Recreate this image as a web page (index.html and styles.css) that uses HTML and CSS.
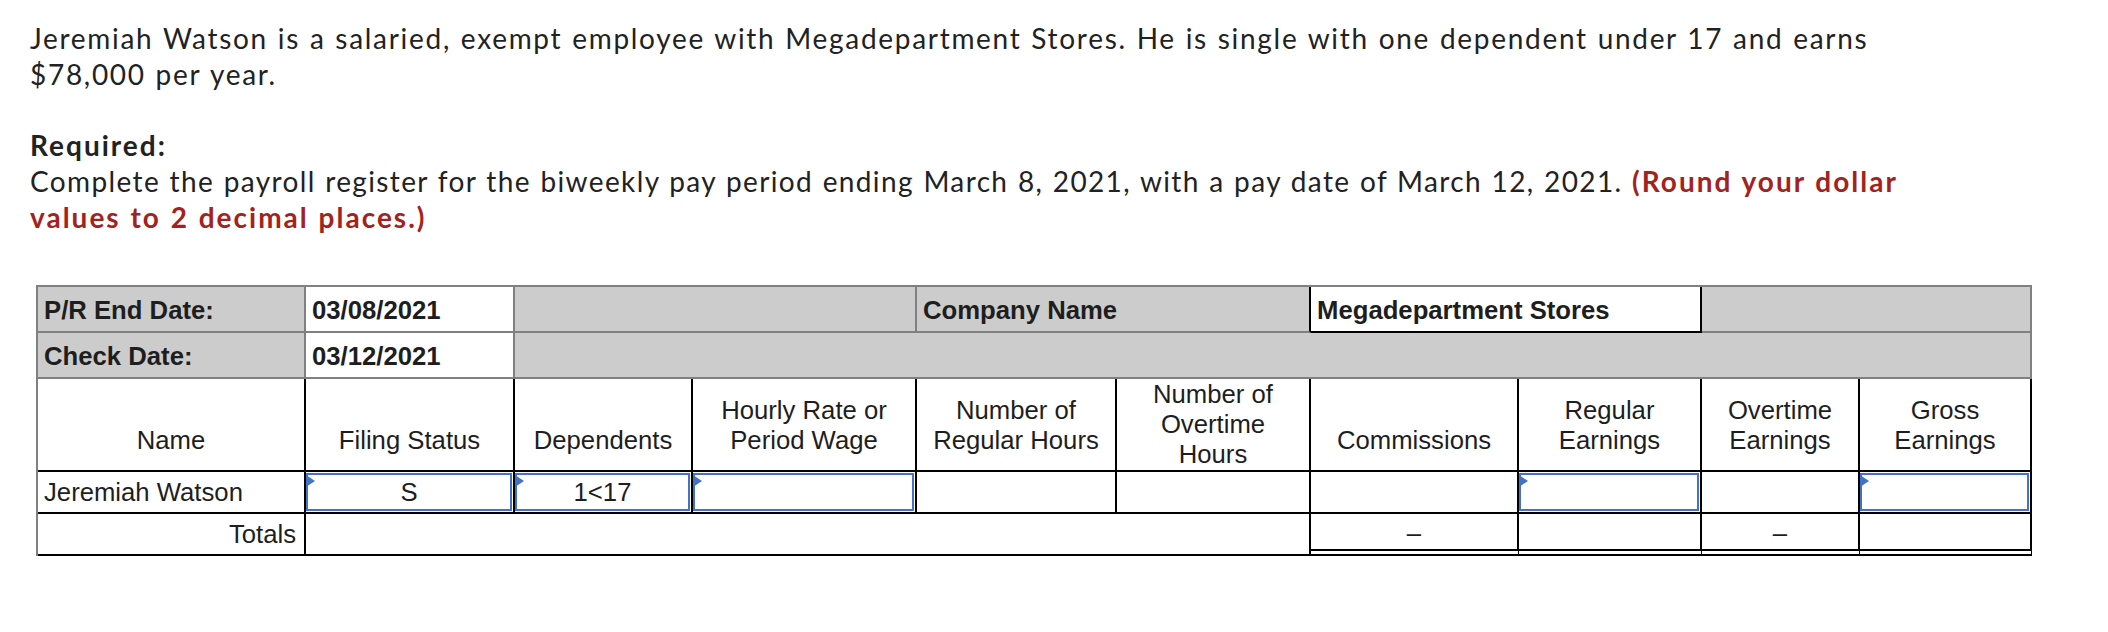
FILE: index.html
```html
<!DOCTYPE html>
<html lang="en">
<head>
<meta charset="utf-8">
<title>Payroll register</title>
<link rel="stylesheet" href="styles.css">
</head>
<body>
<div class="page">
  <p class="intro">Jeremiah Watson is a salaried, exempt employee with Megadepartment Stores. He is single with one dependent under 17 and earns $78,000 per year.</p>
  <div class="req">
    <strong class="req-title">Required:</strong>
    <p class="req-text">Complete the payroll register for the biweekly pay period ending March 8, 2021, with a pay date of March 12, 2021. <strong class="red">(Round your dollar</strong> <strong class="red">values to 2 decimal places.)</strong></p>
  </div>

  <div class="register">
    <div class="c top">P/R End Date:</div>
    <div class="c top white">03/08/2021</div>
    <div class="c top span2"></div>
    <div class="c top span2 dark-r">Company Name</div>
    <div class="c top span2 white mega">Megadepartment Stores</div>
    <div class="c top span2"></div>

    <div class="c top">Check Date:</div>
    <div class="c top white">03/12/2021</div>
    <div class="c top span8"></div>

    <div class="c head">Name</div>
    <div class="c head">Filing Status</div>
    <div class="c head">Dependents</div>
    <div class="c head">Hourly Rate or<br>Period Wage</div>
    <div class="c head">Number of<br>Regular Hours</div>
    <div class="c head three">Number of<br>Overtime<br>Hours</div>
    <div class="c head">Commissions</div>
    <div class="c head">Regular<br>Earnings</div>
    <div class="c head">Overtime<br>Earnings</div>
    <div class="c head">Gross<br>Earnings</div>

    <div class="c data name">Jeremiah Watson</div>
    <div class="c data"><div class="input">S</div></div>
    <div class="c data"><div class="input">1&lt;17</div></div>
    <div class="c data"><div class="input"></div></div>
    <div class="c data"></div>
    <div class="c data"></div>
    <div class="c data"></div>
    <div class="c data"><div class="input"></div></div>
    <div class="c data"></div>
    <div class="c data"><div class="input"></div></div>

    <div class="c data totals">Totals</div>
    <div class="c data span5"></div>
    <div class="c data dbl">–</div>
    <div class="c data dbl"></div>
    <div class="c data dbl">–</div>
    <div class="c data dbl"></div>
  </div>
</div>
</body>
</html>
```

FILE: styles.css
```css
html, body {
  margin: 0;
  padding: 0;
  background: #ffffff;
}

.page {
  padding: 20px 0 0 30px;
  font-family: "Lato", "Open Sans", sans-serif;
  color: #222222;
}

.intro,
.req {
  margin: 0;
  width: 1910px;
  font-size: 28px;
  line-height: 36px;
  letter-spacing: 1.7px;
  word-spacing: 1px;
}

.req {
  margin-top: 35px;
}

.req-title {
  display: block;
  font-weight: 700;
  letter-spacing: 2px;
}

.req-text {
  margin: 0;
  letter-spacing: 1.37px;
}

.red {
  color: #a4221e;
  font-weight: 700;
  letter-spacing: 2px;
}

.register {
  margin: 50px 0 0 6px;
  display: grid;
  grid-template-columns: 268px 209px 178px 224px 200px 194px 208px 183px 158px 172px;
  grid-template-rows: 46px 46px 93px 42px 42px;
  width: max-content;
  border-top: 2px solid #808080;
  border-left: 2px solid #808080;
  font-family: "Liberation Sans", Arial, sans-serif;
  font-size: 25.7px;
  color: #1e1e1e;
}

.c {
  box-sizing: border-box;
  border-right: 2px solid #000000;
  border-bottom: 2px solid #000000;
  min-width: 0;
}

.top {
  background: #cccccc;
  border-color: #808080;
  display: flex;
  align-items: center;
  padding: 2px 6px 0;
  font-weight: 700;
}

.white {
  background: #ffffff;
}

.dark-r {
  border-right-color: #000000;
}

.mega {
  border-right-color: #000000;
  border-bottom-color: #000000;
}

.span2 { grid-column: span 2; }
.span5 { grid-column: span 5; }
.span8 { grid-column: span 8; }

.head {
  display: flex;
  align-items: flex-end;
  justify-content: center;
  text-align: center;
  line-height: 30px;
  padding-bottom: 15px;
}

.head.three {
  padding-bottom: 1px;
}

.data {
  display: flex;
  align-items: center;
  justify-content: center;
  line-height: 29px;
}

.name {
  justify-content: flex-start;
  padding-left: 6px;
}

.totals {
  justify-content: flex-end;
  padding-right: 8px;
}

.dbl {
  border-bottom: 7px double #000000;
  align-items: flex-start;
  padding-top: 5px;
}

.input {
  position: relative;
  box-sizing: border-box;
  align-self: stretch;
  flex: 1;
  margin: 1px 1px 1px 0;
  border: 2px solid #4472c4;
  display: flex;
  align-items: center;
  justify-content: center;
}

.input::before {
  content: "";
  position: absolute;
  left: -2px;
  top: 0;
  border-left: 9px solid #4472c4;
  border-top: 6px solid transparent;
  border-bottom: 6px solid transparent;
}
```
